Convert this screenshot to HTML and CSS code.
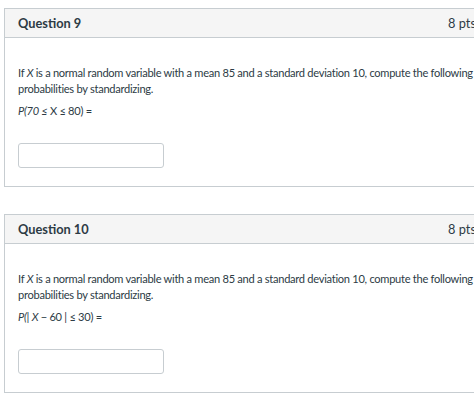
FILE: index.html
```html
<!DOCTYPE html>
<html lang="en">
<head>
    <meta charset="UTF-8">
    <title>Quiz</title>
    <link rel="stylesheet" href="styles.css">
</head>
<body>
    <div class="quiz">
        <div class="question">
            <div class="question-header">
                <span class="question-name">Question 9</span>
                <span class="question-points">8 pts</span>
            </div>
            <div class="question-body">
                <p class="question-text">If <i>X</i> is a normal random variable with a mean 85 and a standard deviation 10, compute the following probabilities by standardizing.</p>
                <p class="question-formula"><i>P</i><i>(70 ≤</i> X ≤ 80) =</p>
                <input type="text" class="answer">
            </div>
        </div>

        <div class="question">
            <div class="question-header">
                <span class="question-name">Question 10</span>
                <span class="question-points">8 pts</span>
            </div>
            <div class="question-body">
                <p class="question-text">If <i>X</i> is a normal random variable with a mean 85 and a standard deviation 10, compute the following probabilities by standardizing.</p>
                <p class="question-formula"><i>P(|</i> <i>X</i> − 60 | ≤ 30) =</p>
                <input type="text" class="answer">
            </div>
        </div>
    </div>
</body>
</html>
```

FILE: styles.css
```css
html, body { overflow: hidden; }
body { font-family: Lato, "Open Sans", sans-serif; margin: 0; padding: 8px 0 0 4px; background: #fff; color: #2d3b45; }
.quiz { width: 486px; }
.question { border: 1px solid #c7cdd1; margin-bottom: 27px; background: #fff; }
.question-header { display: flex; justify-content: space-between; align-items: center; height: 28px; padding: 0 13px; background: #f5f5f5; border-bottom: 1px solid #c7cdd1; }
.question-name { font-size: 12.8px; font-weight: bold; }
.question-points { font-size: 12.8px; }
.question-body { padding: 27px 13px 18px; }
.question-text { margin: 0; font-size: 11.1px; letter-spacing: -0.28px; line-height: 16px; width: 470px; }
.question-formula { margin: 6px 0 0; font-size: 11.1px; letter-spacing: -0.28px; line-height: 16px; }
.answer { display: block; margin-top: 24px; width: 146px; height: 25px; box-sizing: border-box; border: 1px solid #c7cdd1; border-radius: 3px; background: #fff; padding: 0 6px; }
```
